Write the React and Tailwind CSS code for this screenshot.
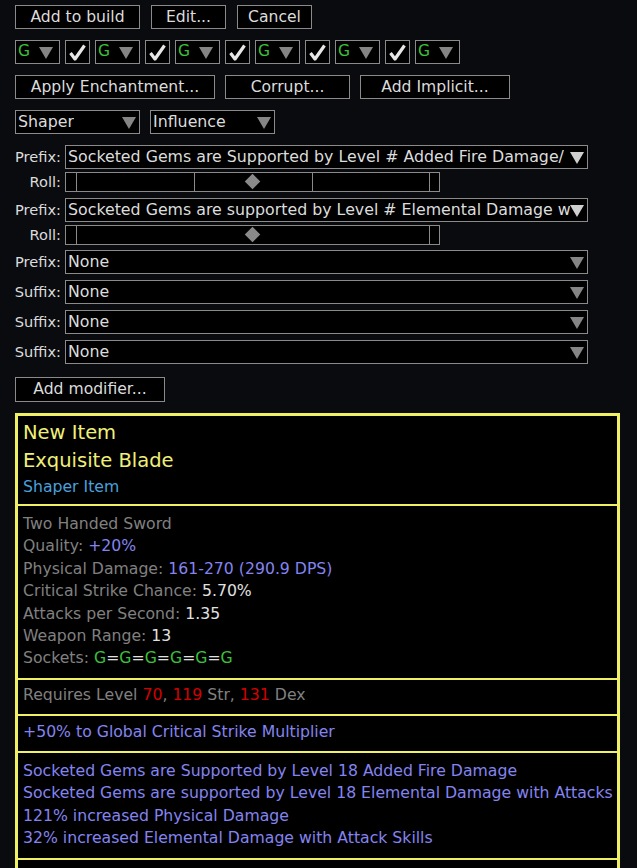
import React from "react";

const font = { fontFamily: '"DejaVu Sans", "Liberation Sans", sans-serif' };

const Btn = ({ w, h = "h-[24px]", children }) => (
  <div
    className={`${h} ${w} flex items-center justify-center border border-[#8a8a8a] bg-black pt-[1px] text-[15.6px] text-[#dcdcdc]`}
  >
    {children}
  </div>
);

const Tri = ({ light }) => (
  <svg width="14" height="13" viewBox="0 0 14 13" className="shrink-0">
    <path d="M0 1 L14 1 L7 13 Z" fill={light ? "#cfcfcf" : "#858585"} />
  </svg>
);

const Gem = () => (
  <div className="h-[24px] w-[45px] flex items-center justify-between border border-[#8a8a8a] bg-black pl-[2px] pr-[6px] text-[15.5px] text-[#3cc03c]">
    <span>G</span>
    <Tri />
  </div>
);

const Check = () => (
  <div className="h-[24px] w-[25px] flex items-center justify-center border border-[#8a8a8a] bg-black">
    <svg width="17" height="17" viewBox="0 0 17 17">
      <path
        d="M1.5 9 L6 15 L15.5 1.5"
        fill="none"
        stroke="#e8e8e8"
        strokeWidth="3.2"
        strokeLinejoin="round"
      />
    </svg>
  </div>
);

const Select = ({ w, text, light }) => (
  <div
    className={`h-[24px] ${w} flex items-center justify-between border border-[#8a8a8a] bg-black pl-[2px] pr-[3px] text-[15.8px] text-[#dcdcdc]`}
  >
    <span className="whitespace-nowrap overflow-hidden">{text}</span>
    <Tri light={light} />
  </div>
);

const ModRow = ({ label, text, light }) => (
  <div className="flex items-center">
    <div className="w-[61px] text-right text-[14.6px] leading-none text-[#dcdcdc]">{label}</div>
    <div className="ml-[4px]">
      <Select w="w-[523px]" text={text} light={light} />
    </div>
  </div>
);

const Roll = ({ thirds }) => (
  <div className="flex h-[20px] items-center">
    <div className="w-[61px] text-right text-[14.6px] leading-none text-[#dcdcdc]">Roll:</div>
    <div className="ml-[4px] relative h-[20px] w-[375px] border border-[#8a8a8a] bg-black">
      <div className="absolute left-[10px] top-0 h-full w-px bg-[#8a8a8a]" />
      <div className="absolute right-[9px] top-0 h-full w-px bg-[#8a8a8a]" />
      {thirds && (
        <>
          <div className="absolute left-[128px] top-0 h-full w-px bg-[#8a8a8a]" />
          <div className="absolute left-[246px] top-0 h-full w-px bg-[#8a8a8a]" />
        </>
      )}
      <div className="absolute left-[181px] top-[3px] h-[11px] w-[11px] rotate-45 bg-[#8a8a8a]" />
    </div>
  </div>
);

const Gray = ({ children }) => <span className="text-[#808080]">{children}</span>;
const Wh = ({ children }) => <span className="text-[#e0e0e0]">{children}</span>;
const Blue = ({ children }) => <span className="text-[#8484f0]">{children}</span>;
const Red = ({ children }) => <span className="text-[#d40000]">{children}</span>;
const Grn = ({ children }) => <span className="text-[#3cc03c]">{children}</span>;

const Sep = () => <div className="h-[2px] bg-[#f0f064]" />;

export default function App() {
  return (
    <div style={font} className="min-h-screen w-full bg-[#090b0f] pt-[5px] overflow-hidden">
      {/* buttons */}
      <div className="flex gap-[11px] pl-[15px]">
        <Btn w="w-[125px]">Add to build</Btn>
        <Btn w="w-[75px]">Edit...</Btn>
        <Btn w="w-[75px]">Cancel</Btn>
      </div>

      {/* sockets */}
      <div className="mt-[11px] flex gap-[5px] pl-[15px]">
        {[0, 1, 2, 3, 4].map((i) => (
          <React.Fragment key={i}>
            <Gem />
            <Check />
          </React.Fragment>
        ))}
        <Gem />
      </div>

      <div className="mt-[11px] flex gap-[10px] pl-[15px]">
        <Btn w="w-[200px]">Apply Enchantment...</Btn>
        <Btn w="w-[125px]">Corrupt...</Btn>
        <Btn w="w-[150px]">Add Implicit...</Btn>
      </div>

      <div className="mt-[11px] flex gap-[10px] pl-[15px]">
        <Select w="w-[125px]" text="Shaper" />
        <Select w="w-[125px]" text="Influence" />
      </div>

      {/* mods */}
      <div className="mt-[11px] flex flex-col">
        <ModRow
          label="Prefix:"
          light
          text="Socketed Gems are Supported by Level # Added Fire Damage/"
        />
        <div className="mt-[3px]">
          <Roll thirds />
        </div>
        <div className="mt-[6px]">
          <ModRow
            label="Prefix:"
            light
            text="Socketed Gems are supported by Level # Elemental Damage w"
          />
        </div>
        <div className="mt-[3px]">
          <Roll />
        </div>
        <div className="mt-[5px] flex flex-col gap-[6px]">
          <ModRow label="Prefix:" text="None" />
          <ModRow label="Suffix:" text="None" />
          <ModRow label="Suffix:" text="None" />
          <ModRow label="Suffix:" text="None" />
        </div>
      </div>

      <div className="mt-[13px] pl-[15px]">
        <Btn w="w-[150px]" h="h-[25px]">Add modifier...</Btn>
      </div>

      {/* item tooltip */}
      <div className="ml-[15px] mt-[11px] w-[605px] border-[3px] border-b-0 border-[#f0f064] bg-black">
        <div className="px-[5px] pt-[3px] pb-[5px]">
          <div className="text-[19.5px] leading-[28px] text-[#f0f078]">New Item</div>
          <div className="text-[19.5px] leading-[28px] text-[#f0f078]">Exquisite Blade</div>
          <div className="text-[15.7px] leading-[24px] text-[#4aa0dc]">Shaper Item</div>
        </div>
        <Sep />
        <div className="px-[5px] pt-[7px] pb-[8px] text-[15.7px] leading-[22.4px]">
          <div><Gray>Two Handed Sword</Gray></div>
          <div><Gray>Quality: </Gray><Blue>+20%</Blue></div>
          <div><Gray>Physical Damage: </Gray><Blue>161-270 (290.9 DPS)</Blue></div>
          <div><Gray>Critical Strike Chance: </Gray><Wh>5.70%</Wh></div>
          <div><Gray>Attacks per Second: </Gray><Wh>1.35</Wh></div>
          <div><Gray>Weapon Range: </Gray><Wh>13</Wh></div>
          <div>
            <Gray>Sockets: </Gray>
            <Grn>G</Grn><Wh>=</Wh><Grn>G</Grn><Wh>=</Wh><Grn>G</Grn><Wh>=</Wh>
            <Grn>G</Grn><Wh>=</Wh><Grn>G</Grn><Wh>=</Wh><Grn>G</Grn>
          </div>
        </div>
        <Sep />
        <div className="px-[5px] pt-[4px] pb-[8px] text-[15.7px] leading-[22px]">
          <Gray>Requires Level </Gray><Red>70</Red><Gray>, </Gray><Red>119</Red>
          <Gray> Str, </Gray><Red>131</Red><Gray> Dex</Gray>
        </div>
        <Sep />
        <div className="px-[5px] pt-[5px] pb-[8px] text-[15.7px] leading-[22px]">
          <Blue>+50% to Global Critical Strike Multiplier</Blue>
        </div>
        <Sep />
        <div className="px-[5px] pt-[7px] pb-[9px] text-[15.7px] leading-[22.4px] text-[#8484f0] whitespace-nowrap">
          <div>Socketed Gems are Supported by Level 18 Added Fire Damage</div>
          <div>Socketed Gems are supported by Level 18 Elemental Damage with Attacks</div>
          <div>121% increased Physical Damage</div>
          <div>32% increased Elemental Damage with Attack Skills</div>
        </div>
        <Sep />
        <div className="h-[30px]" />
      </div>
    </div>
  );
}
